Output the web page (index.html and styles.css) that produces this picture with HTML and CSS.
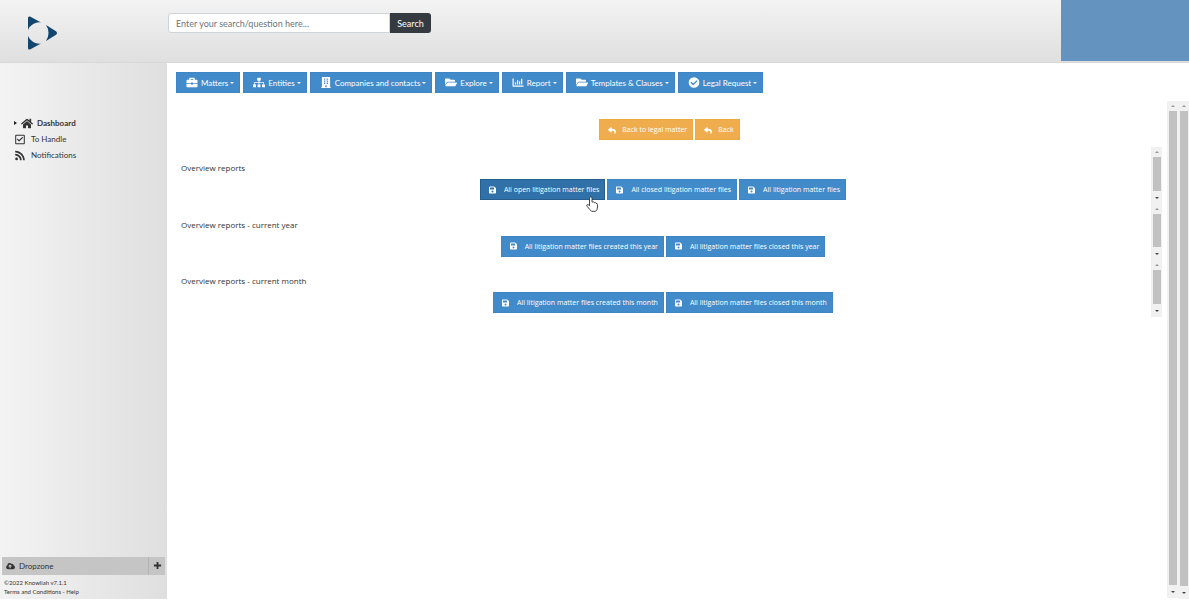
FILE: index.html
```html
<!DOCTYPE html>
<html lang="en">
<head>
  <meta charset="UTF-8">
  <meta name="viewport" content="width=device-width, initial-scale=1.0">
  <title>Knowliah - Overview reports</title>
  <link rel="stylesheet" href="styles.css">
</head>
<body>
  <!-- shared icons -->
  <svg class="sprite" aria-hidden="true">
    <symbol id="folder" viewBox="0 0 576 512"><path d="M572 295 500 418a48 48 0 0 1-41 22H44c-18 0-30-20-20-36L96 281a48 48 0 0 1 41-25h415c18 0 30 23 20 39zM152 224h328v-48c0-27-21-48-48-48H272l-64-64H48c-27 0-48 21-48 48v278l70-119a96 96 0 0 1 82-47z"/></symbol>
    <symbol id="save" viewBox="0 0 448 512"><path fill-rule="evenodd" d="m434 130-84-84a48 48 0 0 0-34-14H48C21 32 0 53 0 80v352c0 27 21 48 48 48h352c27 0 48-21 48-48V164c0-13-5-25-14-34zM224 416a64 64 0 1 1 0-128 64 64 0 0 1 0 128zm96-312v108c0 7-5 12-12 12H76c-7 0-12-5-12-12V108c0-7 5-12 12-12h236l8 8z"/></symbol>
    <symbol id="reply" viewBox="0 0 512 512"><path d="M8 226 184 74c16-13 40-2 40 19v80c161 2 288 34 288 186 0 61-39 122-83 153-14 10-33-3-28-19 45-145-22-183-177-185v88c0 21-24 32-40 18L8 262c-11-10-11-26 0-36z"/></symbol>
  </svg>

  <div class="app">
    <header class="header">
      <a class="logo" href="#" aria-label="Home">
        <svg viewBox="0 0 30 34"><path fill="#12466f" d="M1 12V2Q1 0 3 .5L14 6.500A12 12 0 0 0 1 14zM19 9l10 6.200q2 1.800 0 3.600L19 25A14 14 0 0 0 19 9zM1 20A12 12 0 0 0 14 27.500L3 33.500Q1 34 1 32z"/></svg>
      </a>
      <form class="search">
        <input type="text" aria-label="Search" placeholder="Enter your search/question here...">
        <button type="button">Search</button>
      </form>
      <div class="user-panel"></div>
    </header>

    <aside class="sidebar">
      <ul class="side-menu">
        <li class="active"><a href="#">
          <span class="arrow"></span>
          <svg viewBox="0 0 576 512"><path d="M280 148 96 300v164c0 9 7 16 16 16h112c9 0 16-7 16-16V368c0-9 7-16 16-16h64c9 0 16 7 16 16v96c0 9 7 16 16 16h112c9 0 16-7 16-16V300L296 148c-5-4-11-4-16 0zM572 251l-84-69V44c0-7-5-12-12-12h-56c-7 0-12 5-12 12v72l-90-74a48 48 0 0 0-61 0L4 251c-5 4-6 12-1 17l25 31c4 5 12 6 17 2L280 107c5-4 11-4 16 0l235 194c5 4 13 3 17-2l25-31c5-5 4-13-1-17z"/></svg>
          Dashboard</a></li>
        <li><a href="#">
          <svg viewBox="0 0 448 512"><path fill-rule="evenodd" d="M400 32H48C22 32 0 54 0 80v352c0 26 22 48 48 48h352c26 0 48-22 48-48V80c0-26-22-48-48-48zm0 400H48V80h352v352zm-36-252L191 352c-5 4-12 4-17 0l-91-91c-5-5-5-12 0-17l23-23c5-5 12-5 17 0l60 61 141-141c5-5 12-5 17 0l23 22c5 5 5 12 0 17z"/></svg>
          To Handle</a></li>
        <li><a href="#">
          <svg viewBox="0 0 448 512"><path d="M128 416a64 64 0 1 1-128 0 64 64 0 0 1 128 0zm176 47C296 307 171 184 17 176c-9-1-17 7-17 16v48c0 8 6 15 15 16 111 7 202 95 209 209 1 9 8 15 16 15h48c9 0 17-8 16-17zm144 0C440 226 248 40 17 32c-9 0-17 7-17 16v48c0 9 7 16 15 16 192 8 345 163 353 353 0 8 7 15 16 15h48c9 0 16-8 16-17z"/></svg>
          Notifications</a></li>
      </ul>

      <div class="side-bottom">
        <div class="dropzone">
          <span class="dropzone-title">
            <svg viewBox="0 0 640 512"><path fill-rule="evenodd" d="M538 227A96 96 0 0 0 395 119 160 160 0 0 0 96 204 144 144 0 0 0 144 480h368a128 128 0 0 0 26-253zM393 288h-65v112c0 9-7 16-16 16h-48c-9 0-16-7-16-16V288h-65c-14 0-22-17-12-27l106-106c6-6 16-6 22 0l106 106c10 10 2 27-12 27z"/></svg>
            Dropzone
          </span>
          <button type="button" aria-label="Add file"><svg viewBox="0 0 10 10"><path d="M4 1h2v3h3v2H6v3H4V6H1V4h3z"/></svg></button>
        </div>
        <p>©2022 Knowliah v7.1.1</p>
        <p><a href="#">Terms and Conditions</a> - <a href="#">Help</a></p>
      </div>
    </aside>

    <main class="main">
      <nav class="toolbar">
        <button type="button" class="btn menu"><svg viewBox="0 0 512 512"><path fill-rule="evenodd" d="M464 128h-80V80c0-27-21-48-48-48H176c-27 0-48 21-48 48v48H48c-27 0-48 21-48 48v112h208v-32h96v32h208V176c0-27-21-48-48-48zm-144 0H192V96h128v32zM304 320v32h-96v-32H0v112c0 27 21 48 48 48h416c27 0 48-21 48-48V320z"/></svg>Matters</button>
        <button type="button" class="btn menu"><svg viewBox="0 0 640 512"><path d="M128 352H32c-18 0-32 14-32 32v96c0 18 14 32 32 32h96c18 0 32-14 32-32v-96c0-18-14-32-32-32zm-24-80h192v48h48v-48h192v48h48v-57c0-22-18-39-39-39H344v-64h40c18 0 32-14 32-32V32c0-18-14-32-32-32H256c-18 0-32 14-32 32v96c0 18 14 32 32 32h40v64H95c-21 0-39 17-39 39v57h48zm264 80h-96c-18 0-32 14-32 32v96c0 18 14 32 32 32h96c18 0 32-14 32-32v-96c0-18-14-32-32-32zm240 0h-96c-18 0-32 14-32 32v96c0 18 14 32 32 32h96c18 0 32-14 32-32v-96c0-18-14-32-32-32z"/></svg>Entities</button>
        <button type="button" class="btn menu"><svg viewBox="0 0 448 512"><path fill-rule="evenodd" d="M436 480h-20V24c0-13-11-24-24-24H56C43 0 32 11 32 24v456H12c-7 0-12 5-12 12v20h448v-20c0-7-5-12-12-12zM128 64h64v64h-64zM256 64h64v64h-64zM128 160h64v64h-64zM256 160h64v64h-64zM128 256h64v64h-64zM256 256h64v64h-64zM192 384h64v96h-64z"/></svg>Companies and contacts</button>
        <button type="button" class="btn menu"><svg viewBox="0 0 576 512"><use href="#folder"/></svg>Explore</button>
        <button type="button" class="btn menu"><svg viewBox="0 0 512 512"><path d="M0 64h56v328h456v56H32c-18 0-32-14-32-32zM112 240h56v104h-56zM208 144h56v200h-56zM304 192h56v152h-56zM400 80h56v264h-56z"/></svg>Report</button>
        <button type="button" class="btn menu"><svg viewBox="0 0 576 512"><use href="#folder"/></svg>Templates &amp; Clauses</button>
        <button type="button" class="btn menu"><svg viewBox="0 0 512 512"><path fill-rule="evenodd" d="M504 256a248 248 0 1 1-496 0 248 248 0 0 1 496 0zM227 387l184-184c7-6 7-16 0-22l-22-23c-7-6-17-6-23 0L216 308l-70-70c-6-6-16-6-23 0l-22 23c-7 6-7 16 0 22l104 104c6 6 16 6 22 0z"/></svg>Legal Request</button>
      </nav>

      <div class="pane">
        <div class="content">
          <div class="btn-row back-row">
            <button type="button" class="btn back"><svg viewBox="0 0 512 512"><use href="#reply"/></svg>Back to legal matter</button>
            <button type="button" class="btn back"><svg viewBox="0 0 512 512"><use href="#reply"/></svg>Back</button>
          </div>

          <div class="sections">
            <section class="section">
              <div class="section-body">
                <h2>Overview reports</h2>
                <div class="btn-row">
                  <button type="button" class="btn report hover"><svg viewBox="0 0 448 512"><use href="#save"/></svg>All open litigation matter files
                    <svg class="cursor" viewBox="0 0 12 16"><path d="M3.500 9V2.200q0-1.500 1.200-1.500T6 2.200V6q2-.5 2.300.6 1.500-.4 1.700.8 1.500-.2 1.500 1.200V11q0 3-2 4.300H5.500Q4 14 1 10.200.3 8.900 1.300 8.500q.8-.2 2.200 1.300z" fill="#fff" stroke="#333" stroke-width=".9"/></svg></button>
                  <button type="button" class="btn report"><svg viewBox="0 0 448 512"><use href="#save"/></svg>All closed litigation matter files</button>
                  <button type="button" class="btn report"><svg viewBox="0 0 448 512"><use href="#save"/></svg>All litigation matter files</button>
                </div>
              </div>
              <div class="scrollbar"><i class="up"></i><i class="thumb"></i><i class="down"></i></div>
            </section>
            <section class="section">
              <div class="section-body">
                <h2>Overview reports - current year</h2>
                <div class="btn-row">
                  <button type="button" class="btn report"><svg viewBox="0 0 448 512"><use href="#save"/></svg>All litigation matter files created this year</button>
                  <button type="button" class="btn report"><svg viewBox="0 0 448 512"><use href="#save"/></svg>All litigation matter files closed this year</button>
                </div>
              </div>
              <div class="scrollbar"><i class="up"></i><i class="thumb"></i><i class="down"></i></div>
            </section>
            <section class="section">
              <div class="section-body">
                <h2>Overview reports - current month</h2>
                <div class="btn-row">
                  <button type="button" class="btn report"><svg viewBox="0 0 448 512"><use href="#save"/></svg>All litigation matter files created this month</button>
                  <button type="button" class="btn report"><svg viewBox="0 0 448 512"><use href="#save"/></svg>All litigation matter files closed this month</button>
                </div>
              </div>
              <div class="scrollbar"><i class="up"></i><i class="thumb"></i><i class="down"></i></div>
            </section>
          </div>
        </div>
        <div class="scrollbar inner"><i class="up"></i><i class="thumb"></i><i class="down"></i></div>
        <div class="scrollbar"><i class="up"></i><i class="thumb"></i><i class="down"></i></div>
      </div>
    </main>
  </div>
</body>
</html>
```
FILE: styles.css
```css
* {
  box-sizing: border-box;
}

body {
  margin: 0;
  background: #fff;
  color: #333;
  font-family: Lato, "Open Sans", sans-serif;
  font-size: 8px;
}

h2, p, ul {
  margin: 0;
  padding: 0;
}

a {
  color: inherit;
  text-decoration: none;
}

button, input {
  font-family: inherit;
}

svg {
  fill: currentColor;
  flex: none;
}

.sprite {
  display: none;
}

.app {
  display: grid;
  grid-template: 63px 1fr / 167px 1fr;
  height: calc(100vh - 14px);
  min-height: 400px;
}

/* header */
.header {
  grid-column: 1 / 3;
  display: flex;
  align-items: flex-start;
  background: linear-gradient(#f3f3f3, #dfdfdf);
  border-bottom: 1px solid #d8d8d8;
}

.logo {
  width: 168px;
  padding: 16px 0 0 27px;
}

.logo svg {
  display: block;
  width: 30px;
  height: 34px;
}

.search {
  display: flex;
  margin-top: 13px;
}

.search input {
  width: 222px;
  height: 20px;
  padding: 0 7px;
  border: 1px solid #ced4da;
  border-radius: 3px 0 0 3px;
  font-size: 9px;
}

.search input::placeholder {
  color: #6c757d;
}

.search button {
  width: 41px;
  height: 20px;
  padding: 0;
  border: 0;
  border-radius: 0 3px 3px 0;
  background: #343a40;
  color: #fff;
  font-size: 9px;
}

.user-panel {
  width: 128px;
  height: 61px;
  margin-left: auto;
  background: #6593c0;
}

/* sidebar */
.sidebar {
  display: flex;
  flex-direction: column;
  justify-content: space-between;
  background: linear-gradient(to right, #f3f3f3, #dfdfdf);
}

.side-menu {
  padding: 52px 0 0 15px;
  list-style: none;
}

.side-menu a {
  display: flex;
  align-items: center;
  gap: 6px;
  height: 16px;
}

.side-menu svg {
  width: 10px;
  height: 11px;
}

.side-menu .active {
  font-weight: bold;
}

.side-menu .active a {
  gap: 4px;
  margin-left: -1px;
}

.side-menu .active svg {
  width: 12px;
}

.arrow {
  width: 3px;
  border: 2px solid transparent;
  border-left: 3px solid #222;
  border-right: 0;
}

.side-bottom {
  padding: 0 2px 3px;
  font-size: 6px;
}

.side-bottom p {
  padding-left: 2px;
  line-height: 9px;
}

.dropzone {
  display: flex;
  height: 18px;
  margin-bottom: 3px;
  background: #c5c5c5;
}

.dropzone-title {
  flex: 1;
  display: flex;
  align-items: center;
  gap: 4px;
  padding-left: 4px;
  border-right: 1px solid #b5b5b5;
  font-size: 8px;
}

.dropzone-title svg {
  width: 9px;
  height: 8px;
}

.dropzone button {
  width: 16px;
  padding: 0 0 4px;
  border: 0;
  background: none;
  color: #333;
}

.dropzone button svg {
  width: 9px;
  height: 9px;
}

/* buttons */
.btn {
  display: flex;
  align-items: center;
  height: 21px;
  padding: 0 5px 0 9px;
  border: 1px solid #3d85c5;
  background: #428bca;
  color: #fff;
  font-size: 8px;
  white-space: nowrap;
}

.menu svg {
  width: 12px;
  height: 11px;
  margin-right: 3px;
}

.menu::after {
  content: "";
  margin-left: 2px;
  border: 2px solid transparent;
  border-top-color: #fff;
  border-bottom: 0;
}

.report, .back {
  padding-left: 8px;
  font-family: "Open Sans", sans-serif;
  font-size: 7px;
}

.report svg {
  width: 7px;
  height: 8px;
  margin-right: 8px;
}

.back {
  border-color: #efa944;
  background: #f0ad4e;
}

.back svg {
  width: 8px;
  height: 8px;
  margin-right: 6px;
}

.report.hover {
  position: relative;
  background: #3071a9;
  border-color: #285e8e;
}

.hover .cursor {
  position: absolute;
  right: 6px;
  bottom: -13px;
  width: 12px;
  height: 16px;
  margin: 0;
}

/* main area */
.main {
  display: flex;
  flex-direction: column;
}

.toolbar {
  display: flex;
  gap: 3px;
  padding: 9px 9px 8px;
}

.pane {
  flex: 1;
  display: flex;
}

.content {
  flex: 1;
  padding: 18px 5px 0 8px;
}

.btn-row {
  display: flex;
  justify-content: center;
  gap: 2px;
}

.back-row {
  margin-bottom: 7px;
  padding-left: 2px;
}

.sections {
  display: grid;
  grid-template-rows: repeat(3, 1fr);
  height: 170px;
}

.section {
  display: flex;
}

.section-body {
  flex: 1;
  padding-top: 14px;
}

.section h2 {
  height: 18px;
  padding-left: 6px;
  font-family: "Open Sans", sans-serif;
  font-size: 8px;
  font-weight: normal;
  line-height: 14px;
}

.scrollbar {
  display: flex;
  flex-direction: column;
  align-items: center;
  width: 11px;
  padding: 4px 0 5px;
  background: #f1f1f1;
}

.scrollbar.inner {
  margin-bottom: 1px;
}

.scrollbar .thumb {
  flex: 1;
  width: 8px;
  margin: 4px 0 6px;
  background: #c1c1c1;
}

.up {
  border: 2px solid transparent;
  border-bottom-color: #999;
  border-top: 0;
}

.down {
  border: 2px solid transparent;
  border-top-color: #444;
  border-bottom: 0;
}
```
